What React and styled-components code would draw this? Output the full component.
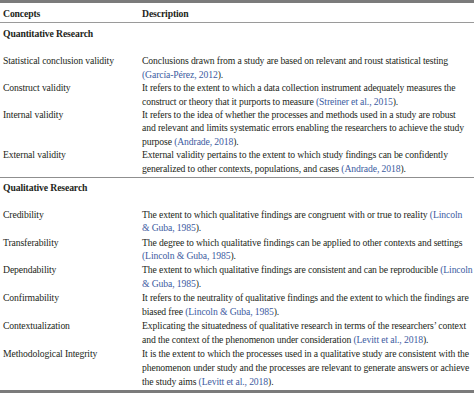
import React from "react";
import styled, { createGlobalStyle } from "styled-components";

const Global = createGlobalStyle`
  html, body { margin: 0; padding: 0; background: #fff; }
  body { overflow: hidden; }
`;

const Table = styled.div`
  width: 474px;
  font-family: "Liberation Serif", "Times New Roman", serif;
  font-size: 9.7px;
  letter-spacing: -0.12px;
  line-height: 13.4px;
  color: #231f20;
`;

const Rule = styled.div`
  height: ${(p) => p.$h}px;
  background: ${(p) => p.$c};
`;

const Grid = styled.div`
  display: grid;
  grid-template-columns: 142px 1fr;
  padding: ${(p) => p.$pad || "0"};
`;

const Concept = styled.div`
  padding-left: 3px;
  font-weight: ${(p) => (p.$bold ? 700 : 400)};
  white-space: nowrap;
`;

const Desc = styled.div`
  font-weight: ${(p) => (p.$bold ? 700 : 400)};
`;

const Line = styled.span`
  display: block;
  white-space: nowrap;
`;

const Cite = styled.span`
  color: #3d5c9f;
`;

const Section = styled.div`
  padding: ${(p) => p.$pad};
  line-height: ${(p) => p.$lh}px;
  display: flex;
  flex-direction: column;
  gap: ${(p) => p.$gap}px;
`;

const SectionTitle = styled.div`
  padding-left: 3px;
  font-weight: 700;
  margin-bottom: ${(p) => p.$mb}px;
`;

const quantitative = [
  {
    c: "Statistical conclusion validity",
    l: [
      ["Conclusions drawn from a study are based on relevant and roust statistical testing"],
      [["(García-Pérez, 2012"], ")."],
    ],
  },
  {
    c: "Construct validity",
    l: [
      ["It refers to the extent to which a data collection instrument adequately measures the"],
      ["construct or theory that it purports to measure ", ["(Streiner et al., 2015"], ")."],
    ],
  },
  {
    c: "Internal validity",
    l: [
      ["It refers to the idea of whether the processes and methods used in a study are robust"],
      ["and relevant and limits systematic errors enabling the researchers to achieve the study"],
      ["purpose ", ["(Andrade, 2018"], ")."],
    ],
  },
  {
    c: "External validity",
    l: [
      ["External validity pertains to the extent to which study findings can be confidently"],
      ["generalized to other contexts, populations, and cases ", ["(Andrade, 2018"], ")."],
    ],
  },
];

const qualitative = [
  {
    c: "Credibility",
    l: [
      ["The extent to which qualitative findings are congruent with or true to reality ", ["(Lincoln"]],
      [["& Guba, 1985"], ")."],
    ],
  },
  {
    c: "Transferability",
    l: [
      ["The degree to which qualitative findings can be applied to other contexts and settings"],
      [["(Lincoln & Guba, 1985"], ")."],
    ],
  },
  {
    c: "Dependability",
    l: [
      ["The extent to which qualitative findings are consistent and can be reproducible ", ["(Lincoln"]],
      [["& Guba, 1985"], ")."],
    ],
  },
  {
    c: "Confirmability",
    l: [
      ["It refers to the neutrality of qualitative findings and the extent to which the findings are"],
      ["biased free ", ["(Lincoln & Guba, 1985"], ")."],
    ],
  },
  {
    c: "Contextualization",
    l: [
      ["Explicating the situatedness of qualitative research in terms of the researchers\u2019 context"],
      ["and the context of the phenomenon under consideration ", ["(Levitt et al., 2018"], ")."],
    ],
  },
  {
    c: "Methodological Integrity",
    l: [
      ["It is the extent to which the processes used in a qualitative study are consistent with the"],
      ["phenomenon under study and the processes are relevant to generate answers or achieve"],
      ["the study aims ", ["(Levitt et al., 2018"], ")."],
    ],
  },
];

function Row({ row }) {
  return (
    <Grid>
      <Concept>{row.c}</Concept>
      <Desc>
        {row.l.map((segs, i) => (
          <Line key={i}>
            {segs.map((s, j) =>
              Array.isArray(s) ? <Cite key={j}>{s[0]}</Cite> : <React.Fragment key={j}>{s}</React.Fragment>
            )}
          </Line>
        ))}
      </Desc>
    </Grid>
  );
}

export default function App() {
  return (
    <>
      <Global />
      <Table>
        <Rule $h={3} $c="#7b7b7b" />
        <Grid $pad="4.3px 0 1.3px">
          <Concept $bold>Concepts</Concept>
          <Desc $bold>Description</Desc>
        </Grid>
        <Rule $h={1} $c="#9a9a9a" />
        <Section $pad="4.3px 0 2px" $gap={0} $lh={13.4}>
          <SectionTitle $mb={13.6}>Quantitative Research</SectionTitle>
          {quantitative.map((r) => (
            <Row key={r.c} row={r} />
          ))}
        </Section>
        <Rule $h={1.5} $c="#8f8f8f" />
        <Section $pad="2.7px 0 1.8px" $gap={0.5} $lh={13.7}>
          <SectionTitle $mb={12.3}>Qualitative Research</SectionTitle>
          {qualitative.map((r) => (
            <Row key={r.c} row={r} />
          ))}
        </Section>
        <Rule $h={3} $c="#7b7b7b" />
      </Table>
    </>
  );
}
